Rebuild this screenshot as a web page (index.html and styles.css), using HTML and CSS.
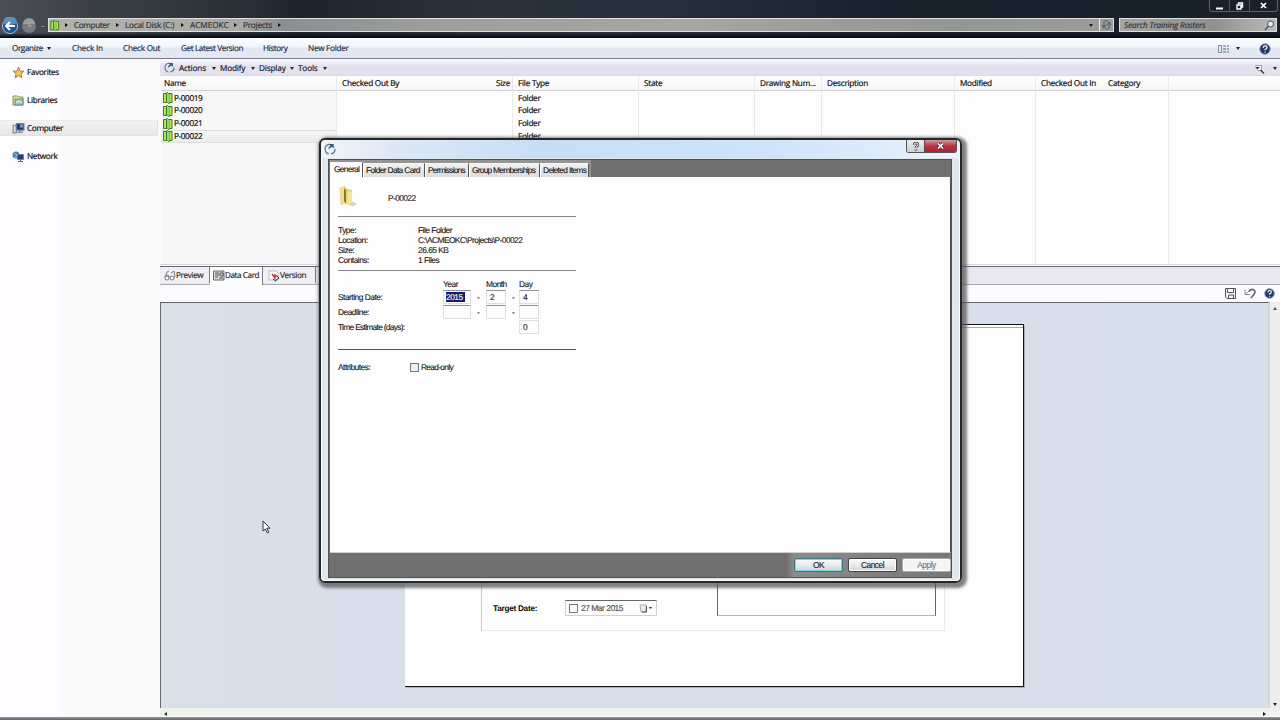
FILE: index.html
```html
<!DOCTYPE html>
<html lang="en">
<head>
<meta charset="utf-8">
<title>Projects</title>
<link rel="stylesheet" href="styles.css">
</head>
<body>
<svg class="defs" aria-hidden="true">
  <symbol id="vault" viewBox="0 0 10 12"><path d="M.5 1.500h3v9h-3zM5 1.500h4v9H5z" fill="#a5ee4d" stroke="#347c1c"/><path d="M4 0l2 2v10l-2-2z" fill="#dcfda2" stroke="#397b22" stroke-width=".7"/></symbol>
  <symbol id="refresh" viewBox="0 0 12 12"><path d="M5.500 1.300Q1.200 1.800 1.200 6t3.600 4.700" fill="none" stroke="#6f8c9d" stroke-width="1.500"/><path d="M7 10.700Q11 10.400 11 6" fill="none" stroke="#55788e" stroke-width="1.400"/><path d="M4.500 1h5.200v4.500L7.800 3.800 5 6 4.200 5l2.200-2.300z" fill="#315c76"/></symbol>
  <symbol id="help" viewBox="0 0 12 12"><circle cx="6" cy="6" r="5.200" fill="#25366b" stroke="#8791ab"/><path d="M4.300 4.800q0-2 1.800-2 1.900 0 1.900 1.500T6.100 6.500v.8M6.100 8.600v1" fill="none" stroke="#fff" stroke-width="1.200"/></symbol>
  <symbol id="pc" viewBox="0 0 12 12"><path d="M1 3h3v7H1z" fill="#dce1e7" stroke="#7b8795"/><path d="M4 1.500h7v6H4z" fill="#233580" stroke="#777f96"/><path d="M5 9.500h5M7.500 8v2" stroke="#67718b"/><path d="M8 2h2v3H7z" fill="#8496cf"/></symbol>
</svg>
<div class="window">
  <header class="titlebar">
    <div class="navbtns">
      <svg width="20" height="18" viewBox="0 0 20 18"><circle cx="10" cy="9" r="7.600" fill="#185695" stroke="#a7bdd4"/><path d="M3 6a7 7 0 0 1 14 0q-7 4-14 0" fill="#5c8dbd"/><path d="M15 9H6m4-4L6 9l4 4" fill="none" stroke="#fff" stroke-width="2"/></svg>
      <svg width="18" height="18" viewBox="0 0 18 18"><circle cx="9" cy="9" r="7.500" fill="#777b7f" stroke="#3f4850"/><path d="M3 7a6 6 0 0 1 12 0z" fill="#989b9d"/><path d="M9 5v5l3-2" stroke="#aeb0b1" fill="none"/></svg>
      <i class="dash"></i>
    </div>
    <div class="address">
      <svg width="10" height="11"><use href="#vault"/></svg>
      <b class="tri"></b><span class="c1">Computer</span><b class="tri"></b><span class="c2">Local Disk (C:)</span><b class="tri"></b><span class="c3">ACMEOKC</span><b class="tri"></b><span class="c4">Projects</span><b class="tri"></b>
      <div class="address-end"><b class="down"></b><svg width="14" height="12" viewBox="0 0 14 12"><path d="M.5 0v12" stroke="#eee"/><path d="M5 2v7m-2-3 2 3 2-3M10 10V3M8 6l2-3 2 3M6 2h3M6 10h3" stroke="#42576b" fill="none"/></svg></div>
    </div>
    <div class="search"><em>Search Training Rosters</em><svg width="11" height="11" viewBox="0 0 11 11"><circle cx="6.500" cy="4" r="3" fill="#e5eaec" stroke="#40556c"/><path d="M4.500 6 1 10" stroke="#40556c" stroke-width="1.400"/></svg></div>
    <div class="caption">
      <span><svg width="8" height="8"><path d="M0 6.500h7" stroke="#fff" stroke-width="2"/></svg></span>
      <span><svg width="8" height="8" viewBox="0 0 8 8"><path d="M2.500 2V1h4v4H5M1 3h4v4H1z" fill="none" stroke="#fff" stroke-width="1.400"/></svg></span>
      <span><svg width="7" height="7" viewBox="0 0 7 7"><path d="M1 1l5 5M6 1L1 6" stroke="#fff" stroke-width="1.700"/></svg></span>
    </div>
  </header>
  <nav class="commands">
    <span class="m1">Organize <b class="down"></b></span><span class="m2">Check In</span><span class="m3">Check Out</span><span class="m4">Get Latest Version</span><span class="m5">History</span><span class="m6">New Folder</span>
    <div class="cmd-right"><svg width="12" height="10" viewBox="0 0 12 10"><path d="M.5 1.500h3v7h-3z" fill="#edf1f5" stroke="#7d8999"/><path d="M5 2h3M5 5h3M5 8h3M9 2h2M9 5h2M9 8h2" stroke="#596475"/></svg><b class="down"></b><svg class="hp" width="12" height="12"><use href="#help"/></svg></div>
  </nav>
  <main class="body">
    <aside class="sidebar">
      <div class="place"><svg width="13" height="13" viewBox="0 0 13 13"><path d="M6.500 1 8 5l4 .2-3.100 2.700 1 4L6.500 9.600l-3.400 2.300 1-4L1 5.200l4-.2z" fill="#f7c45c" stroke="#aa752c" stroke-width=".9"/></svg>Favorites</div>
      <div class="place"><svg width="13" height="13" viewBox="0 0 13 13"><path d="M1 2h5l1 1h4v8H1z" fill="#e8dfa4" stroke="#8a9267"/><path d="M3 5h8v6H3z" fill="#9fc3bd" stroke="#668a82"/><path d="M4 9q3-4 6 0" stroke="#fff" fill="none"/></svg>Libraries</div>
      <div class="place on"><svg width="13" height="13"><use href="#pc"/></svg>Computer</div>
      <div class="place"><svg width="13" height="13" viewBox="0 0 13 13"><circle cx="4" cy="5" r="3.500" fill="#3d84aa"/><path d="M2 3l3 2-2 3" stroke="#a4d7bb" fill="none"/><path d="M5.500 4.500h6v5h-6z" fill="#233c88" stroke="#6d7992"/><path d="M6 11.500h5M8.500 10v2" stroke="#536083"/></svg>Network</div>
    </aside>
    <section class="content">
      <div class="menubar">
        <svg width="11" height="11"><use href="#refresh"/></svg><span class="n1">Actions</span><b class="down"></b><span class="n2">Modify</span><b class="down"></b><span class="n3">Display</span><b class="down"></b><span class="n4">Tools</span><b class="down"></b>
        <div class="menu-right"><svg width="11" height="10" viewBox="0 0 11 10"><path d="M1 1.500h6.500v5H3.500" fill="#fff" stroke="#98a0ad"/><path d="M1 3h5L3.500 5.500z" fill="#333"/><path d="M6.500 6l3.500 3.500" stroke="#333" stroke-width="1.200"/></svg><b class="down"></b></div>
      </div>
      <div class="list">
        <div class="col name"><div class="th">Name</div><div class="td"><svg width="10" height="12"><use href="#vault"/></svg>P-00019</div><div class="td"><svg width="10" height="12"><use href="#vault"/></svg>P-00020</div><div class="td"><svg width="10" height="12"><use href="#vault"/></svg>P-00021</div><div class="td sel"><svg width="10" height="12"><use href="#vault"/></svg>P-00022</div></div>
        <div class="col noline"><div class="th">Checked Out By</div></div>
        <div class="col"><div class="th right">Size</div></div>
        <div class="col"><div class="th">File Type</div><div class="td">Folder</div><div class="td">Folder</div><div class="td">Folder</div><div class="td">Folder</div></div>
        <div class="col"><div class="th">State</div></div>
        <div class="col"><div class="th">Drawing Num...</div></div>
        <div class="col"><div class="th">Description</div></div>
        <div class="col"><div class="th">Modified</div></div>
        <div class="col noline"><div class="th">Checked Out In</div></div>
        <div class="col"><div class="th">Category</div></div>
        <div class="col noline"><div class="th"></div></div>
      </div>
      <div class="tabs">
        <span class="tab t1"><svg width="12" height="11" viewBox="0 0 12 11"><path d="M1 7q2-4 5 0t5-1L10 1 7 3M1 7l2-5 2-1" fill="none" stroke="#788087"/><circle cx="3" cy="8" r="2" fill="#fff" stroke="#777"/><circle cx="8" cy="8" r="2" fill="#fff" stroke="#777"/></svg>Preview</span>
        <span class="tab t2 active"><svg width="12" height="11" viewBox="0 0 12 11"><path d="M.5 1h10.500v9H.5z" fill="#ddd" stroke="#666"/><path d="M2 3h4M2 5h4M2 7h3M7 3h3v3H7zM6 8h4" fill="none" stroke="#555"/></svg>Data Card</span>
        <span class="tab t3"><svg width="12" height="12" viewBox="0 0 12 12"><path d="M1 1h7l2 2v7H1z" fill="#fafafa" stroke="#bbb"/><path d="M4 4l3 4V4M5 6h4" stroke="#bc334b" stroke-width="1.300" fill="none"/><path d="M7 11l4-3-2-2M5 9l3 2" stroke="#28386d" fill="none"/></svg>Version</span><span class="tab t4"></span>
      </div>
      <div class="cardbar">
        <svg width="11" height="11" viewBox="0 0 11 11"><path d="M.5.5h10v10H2L.5 9zM2.500.5v4h6v-4M3.500 10V7h5v3" fill="#f5f5f5" stroke="#555"/></svg>
        <svg width="12" height="11" viewBox="0 0 12 11"><path d="M1 1.500v5h5M1.500 6l4-3.500" fill="none" stroke="#888"/><path d="M5 3.500Q7 1 9 1.500q3 1 1.500 4L7 10" fill="none" stroke="#666" stroke-width="1.600"/></svg>
        <svg width="11" height="11"><use href="#help"/></svg>
      </div>
      <div class="cardarea">
        <div class="canvas"><div class="paper"><div class="group"><span class="target">Target Date:</span><div class="date"><i></i><span>27 Mar 2015</span><svg width="14" height="9" viewBox="0 0 14 9"><path d="M1 1h6v7H2z" fill="#eee" stroke="#aaa"/><path d="M7.500 2v6H3" stroke="#555" fill="none"/><path d="M9.500 3h4l-2 2z" fill="#555"/></svg></div><div class="box"></div></div></div></div>
        <div class="vscroll"><b class="up"></b><b class="down"></b></div>
      </div>
      <div class="hscroll"><b class="left"></b><b class="rt"></b></div>
    </section>
  </main>
  <footer class="strip"></footer>
</div>

<div class="dialog">
  <div class="dlg-title"><svg width="12" height="12"><use href="#refresh"/></svg><div class="dlg-btns"><span class="q"><svg width="8" height="9" viewBox="0 0 8 9"><path d="M2 3q0-2 2-2t2 1.500T4 5v1M4 7v1.500" stroke="#444" stroke-width="2.400" fill="none"/><path d="M2 3q0-2 2-2t2 1.500T4 5v1M4 7v1" stroke="#fff" stroke-width=".9" fill="none"/></svg></span><span class="x"><svg width="9" height="8" viewBox="0 0 9 8"><path d="M2 1.500l5 5M7 1.500L2 6.500" stroke="#643034" stroke-width="3.200"/><path d="M2 1.500l5 5M7 1.500L2 6.500" stroke="#fff" stroke-width="1.700"/></svg></span></div></div>
  <div class="dlg-body">
    <div class="dlg-tabs"><div class="tabset"><span class="dt a">General</span><span class="dt b">Folder Data Card</span><span class="dt c">Permissions</span><span class="dt d">Group Memberships</span><span class="dt e">Deleted Items</span></div></div>
    <div class="page">
      <div class="form">
        <div class="head"><svg width="20" height="22" viewBox="0 0 20 22"><path d="M2 3l5-2 1 16-5 3z" fill="#eee291" stroke="#d5c45f" stroke-width=".5"/><path d="M7 3l7 2v13l-6 2z" fill="#e7d46e"/><path d="M6 3l2 2v14l-2-3z" fill="#8c7930"/><path d="M10 6l4 1v9l5 3-4 2-6-2z" fill="#f1e6a5"/><path d="M14 17l5 2-4 2-5-1z" fill="#d8d5ca"/></svg><span>P-00022</span></div>
        <div class="info"><span>Type:</span><span>File Folder</span><span>Location:</span><span class="loc">C:\ACMEOKC\Projects\P-00022</span><span>Size:</span><span>26.65 KB</span><span>Contains:</span><span>1 Files</span></div>
        <div class="dates"><span></span><span>Year</span><span></span><span>Month</span><span></span><span>Day</span>
          <span>Starting Date:</span><div class="in"><mark>2015</mark></div><span>-</span><div class="in">2</div><span>-</span><div class="in">4</div>
          <span>Deadline:</span><div class="in"></div><span>-</span><div class="in"></div><span>-</span><div class="in"></div>
          <span class="wide">Time Estimate (days):</span><div class="in soft">0</div></div>
        <div class="attrs"><span>Attributes:</span><i></i><span>Read-only</span></div>
      </div>
    </div>
    <div class="actions"><button class="ok">OK</button><button>Cancel</button><button class="off">Apply</button></div>
  </div>
</div>
<svg class="cursor" width="9" height="15" viewBox="0 0 9 15"><path d="M1 1v10l2.300-2 2 4 1.500-.8-2-4H8z" fill="#fff" stroke="#333"/></svg>
</body>
</html>
```
FILE: styles.css
```css
* { box-sizing: border-box; }
body { margin: 0; width: 1280px; height: 720px; overflow: hidden; position: relative; font: 8.2px/12px "Open Sans", "Noto Sans", sans-serif; letter-spacing: -.38px; color: #080808; -webkit-text-stroke: .18px; text-rendering: geometricPrecision; white-space: nowrap; background: #fdfdfe; }
svg { display: block; flex: none; }
.defs { position: absolute; width: 0; height: 0; }
.window { display: flex; flex-direction: column; height: 720px; }
.down, .tri, .up, .left, .rt { display: block; flex: none; width: 0; height: 0; border: 2.5px solid transparent; }
.down { border-top: 3px solid #222; border-bottom: 0; }
.up { border-bottom: 3px solid #555; border-top: 0; }
.tri, .rt { border-left: 3px solid #111; border-right: 0; }
.left { border-right: 3px solid #333; border-left: 0; }

.titlebar { position: relative; height: 38px; flex: none; display: flex; align-items: flex-start; padding-top: 18px; background: linear-gradient(#0000 0 33px, #090d17 37px), linear-gradient(90deg, #4b4f54, #3a3f45 100px, #2a3037 240px, #1e242c 300px, #2b323c 480px, #27303b 650px, #19222c 900px, #18202a); }
.navbtns { display: flex; width: 48px; align-items: center; margin-top: -1px; }
.dash { width: 4px; height: 1px; background: #6d8ca3; margin-left: 3px; }
.address, .search { height: 14px; border: 1px solid #e0e0e0; background: linear-gradient(90deg, #b2b2ae, #a8a9a6 18%, #8c8e90 22%, #9fa09e 38%, #a6a6a3 60%, #949595 85%, #9b9c9b); display: flex; align-items: center; color: #303338; }
.address { width: 1066px; padding-left: 1px; }
.address span, .search em { display: block; padding-top: 2px; }
.address span { margin-left: 6px; }
.address .tri { margin-left: 5px; }
.address .c1 { width: 37px; } .address .c2 { width: 51px; letter-spacing: -.2px; } .address .c3 { width: 39px; letter-spacing: 0; } .address .c4 { width: 30px; letter-spacing: -.2px; }
.address-end { margin-left: auto; display: flex; align-items: center; gap: 6px; }
.search { margin-left: 5px; width: 158px; justify-content: space-between; padding: 0 1px 0 4px; background: linear-gradient(90deg, #a5a5a3, #90908f 60%, #bbb); letter-spacing: -.15px; }
.caption { position: absolute; right: 2px; top: 0; height: 12px; display: flex; border: 1px solid #59616b; border-top: 0; border-radius: 0 0 3px 3px; }
.caption span { display: flex; justify-content: center; align-items: center; width: 19px; }
.caption span:first-child { width: 20px; border-right: 1px solid #49515b; }
.caption span:last-child { width: 28px; border-left: 1px solid #49515b; }

.commands { height: 21px; flex: none; display: flex; align-items: center; background: linear-gradient(#fcfdff, #f0f5fb 45%, #e4e8f3 50%, #e2e7f2); border-bottom: 1px solid #767c88; padding: 1px 0 0 12px; color: #1e2d45; letter-spacing: -.42px; }
.commands .m1 { width: 60px; display: flex; align-items: center; gap: 4px; } .m2 { width: 51px; } .m3 { width: 58px; } .m4 { width: 82px; } .m5 { width: 45px; }
.m6 { letter-spacing: -.28px; }
.m2 { letter-spacing: -.2px; } .m3 { letter-spacing: -.25px; }
.cmd-right { margin-left: auto; display: flex; gap: 6px; align-items: center; padding-right: 9px; }
.cmd-right .hp { margin-left: 13px; }

.body { display: flex; flex: 1; min-height: 0; }
.sidebar { width: 160px; background: linear-gradient(90deg, #fdfcfe 60px, #f9f9fa 66px); padding-top: 5px; }
.place { height: 16px; margin-bottom: 12px; padding: 1px 0 0 12px; display: flex; align-items: center; gap: 2px; letter-spacing: -.3px; }
.place svg { margin-top: -1px; }
.place.on { width: 158px; background: linear-gradient(#f3f3f3, #e7e7e7); border: 1px solid #e1e1e1; border-left: 0; border-top-color: #ececec; }
.content { flex: 1; min-width: 0; display: flex; flex-direction: column; }
.menubar { height: 17px; flex: none; background: linear-gradient(#fafaff, #e3e1ee 45%, #e4e1ed); border-bottom: 1px solid #dbd9e2; padding: 3px 3px 0 4px; display: flex; align-items: center; color: #15152a; letter-spacing: -.15px; }
.menubar > svg { margin-top: -2px; }
.menubar .down { margin-right: 4px; }
.n1 { margin-left: 4px; width: 33px; } .n2 { width: 31px; } .n3 { width: 31px; } .n4 { width: 25px; }
.menu-right { margin-left: auto; display: flex; align-items: center; gap: 8px; }
.menubar .menu-right .down { margin-right: 0; }
.list { height: 189px; flex: none; padding-left: 1px; display: grid; grid-template-columns: 176px 119px 57px 126px 116px 67px 133px 81px 67px 66px 1fr; background: #fdfdfd; border-bottom: 1px solid #d8d8de; }
.col { border-right: 1px solid #eaeaea; min-width: 0; }
.col.noline { border-right: 0; }
.col.name { background: #f7f7f7; }
.th { height: 15px; padding: 2px 0 0 5px; border-bottom: 1px solid #d0d0d0; background: linear-gradient(#fdfdfd, #f7f7f8); margin-bottom: 1px; letter-spacing: -.24px; }
.col.name .th { padding-left: 3px; }
.th.right { text-align: right; padding-right: 2px; }
.td { height: 12.67px; padding: 1px 0 0 5px; display: flex; align-items: center; letter-spacing: -.28px; }
.td svg { margin-top: -1px; }
.name .td { padding-left: 2px; gap: 1px; letter-spacing: -.38px; }
.td.sel { background: linear-gradient(#f6f6f6, #ececec); border: 1px solid #dedede; border-left: 0; border-right: 0; }
.tabs { height: 19px; flex: none; display: flex; margin-top: 1px; background: #e9e7f1; border-top: 1px solid #686870; border-bottom: 1px solid #aaa9b0; }
.tab { display: flex; align-items: center; border-right: 1px solid #777; padding: 1px 0 0 4px; background: #f0eff4; height: 16px; color: #292929; }
.tab.active { background: #fdfdfe; height: 18px; padding: 0 0 1px 3px; letter-spacing: -.45px; }
.t1 { width: 50px; } .t2 { width: 53px; } .t3 { width: 53px; padding-left: 5px; } .t4 { width: 1px; }
.cardbar { height: 17px; flex: none; display: flex; justify-content: flex-end; align-items: center; gap: 8px; padding-right: 5px; background: #fcfcfe; }
.cardarea { flex: 1; display: flex; min-height: 0; }
.canvas { flex: 1; background: linear-gradient(90deg, #dae0e7, #d8dfeb 20%, #d8dfeb 80%, #d7e0ea); border-top: 1px solid #606570; border-left: 1px solid #686b70; padding: 21px 0 0 244px; border-right: 2px solid #d3d6dc; }
.paper { width: 619px; height: 363px; background: #fdfdfe; border: solid #111; border-width: 1px 1.5px 1.5px 0; box-shadow: inset 0 2px #fff, inset 0 3px #aaa, 1px 1px 0 #8888; padding: 3px 78px 55px 76px; }
.group { height: 303px; border: 1px solid #e9e9e9; border-left-color: #c8c8c8; display: flex; align-items: flex-end; padding: 0 8px 14px 11px; }
.target { width: 72px; font: bold 8.2px/14px "Liberation Sans", Arial, sans-serif; letter-spacing: -.25px; -webkit-text-stroke: 0; }
.date { width: 92px; height: 16px; border: 1px solid #d1d1d1; border-top-color: #666; display: flex; align-items: center; padding: 0 3px; font: 8.5px/12px "Liberation Sans", sans-serif; letter-spacing: -.52px; color: #555; }
.date i { width: 9px; height: 9px; border: 1px solid #777; margin-right: 3px; }
.date svg { margin-left: auto; }
.box { width: 219px; height: 60px; border: 1px solid #666; border-bottom-color: #b5b5b5; margin-left: auto; }
.vscroll { width: 10px; background: #ededee; display: flex; flex-direction: column; align-items: center; justify-content: space-between; padding: 5px 0 2px; }
.hscroll { height: 9px; flex: none; background: #f0f0ef; display: flex; justify-content: space-between; align-items: center; padding: 3px 14px 0 4px; border-bottom: 1px solid #fff; }
.strip { height: 3px; flex: none; background: linear-gradient(#969696, #606568); }

.dialog { position: absolute; left: 319px; top: 138px; width: 643px; height: 445px; border: 2px solid #24272a; border-radius: 6px; background: linear-gradient(90deg, #f2f5f8, #dce7f5 80px, #c8def7 220px, #cee2fb 430px, #dfebfa 560px, #edf5fc); box-shadow: 2px 2px 3px 3px #555b; padding: 1px 8px 3px 7px; display: flex; flex-direction: column; font: 8.4px/10px "Liberation Sans", Arial, sans-serif; letter-spacing: -.5px; color: #151515; -webkit-text-stroke: .12px; }
.dialog::before { content: ""; position: absolute; inset: 18px 0 0 0; background: #e1e8ed; border: 1px solid #fff; border-top: 0; border-radius: 0 0 4px 4px; }
.dlg-title { position: relative; height: 18px; flex: none; display: flex; align-items: flex-start; padding-top: 2px; margin-left: -4px; }
.dlg-btns { margin: -3px -5px 0 auto; display: flex; height: 13px; border: 1px solid #555; border-top: 0; border-radius: 0 0 3px 3px; overflow: hidden; }
.dlg-btns span { display: flex; align-items: center; justify-content: center; }
.q { width: 17px; background: linear-gradient(#eee, #ccd1d5); }
.x { width: 32px; background: linear-gradient(#cf9a9b, #b73543 50%, #a52737); border-left: 1px solid #644; }
.dlg-body { position: relative; flex: 1; background: #707070; border: 1px solid #4f5254; padding: 0 0 0 1px; display: flex; flex-direction: column; }
.dlg-tabs { height: 17px; flex: none; }
.tabset { width: 261px; height: 17px; padding-top: 2px; display: flex; align-items: flex-end; background: #949494; }
.dt { height: 14px; border: 1px solid #555; border-left-color: #fff; border-top-color: #f8f8f8; border-bottom: 0; background: linear-gradient(#f0f0f0, #ddd); padding: 1px 0 0 2px; letter-spacing: -.65px; }
.dt.a { height: 15px; width: 33px; background: #fdfdfd; padding-left: 3px; }
.b { width: 62px; } .dt.c { width: 44px; letter-spacing: -.8px; } .dt.d { width: 71px; letter-spacing: -.75px; } .e { width: 49px; }
.page { height: 376px; flex: none; background: #fdfdfd; border-right: 1px solid #555; border-bottom: 1px solid #d0d0d0; padding: 8px 0 0 8px; }
.form { width: 238px; }
.head { height: 32px; border-bottom: 1px solid #888; display: flex; align-items: flex-start; letter-spacing: -.6px; }
.head span { padding: 7.5px 0 0 30px; }
.info { height: 54px; border-bottom: 1px solid #888; display: grid; grid-template-columns: 80px 1fr; grid-auto-rows: 9.8px; padding-top: 8.2px; align-content: start; }
.loc { letter-spacing: -.57px; }
.dates { height: 79px; border-bottom: 1px solid #555; padding-top: 8px; display: grid; grid-template-columns: 105px 28px 15px 20px 13px 20px; grid-template-rows: 10px 15px 15.5px 15px; align-content: start; align-items: center; }
.dates > span:nth-child(n+8) { padding-left: 6px; }
.dates > span:nth-child(6n+1) { padding-left: 0; }
.in { height: 14px; border: 1px solid #dfdfe2; border-top-color: #8b8fa0; padding: 1px 3px; }
.in.soft { border-top-color: #dfdfe2; }
.in mark { display: inline-block; background: #151b64; color: #fff; width: 19px; height: 10px; margin-left: -1px; }
.dates .wide { grid-column: span 5; letter-spacing: -.7px; }
.attrs { display: flex; padding-top: 12px; align-items: center; }
.attrs span:first-child { width: 72px; }
.attrs i { width: 9px; height: 9px; background: #eee; border: 1px solid #777; margin-right: 2px; }
.attrs span:last-child { letter-spacing: -.7px; }
.actions { flex: 1; display: flex; justify-content: flex-end; align-items: center; gap: 5px; padding-left: 464px; background: linear-gradient(90deg, #707070 456px, #8b8b8b 464px, #777 100%); }
button { font: inherit; letter-spacing: inherit; width: 49px; height: 14px; padding: 0; border: 1px solid #444; border-radius: 2px; background: linear-gradient(#fafafa, #ececec 50%, #d3d3d3); color: #222; box-shadow: inset 0 0 0 1px #fff; }
button.ok { border-color: #427482; box-shadow: inset 0 0 0 1px #7dd3df; }
button.off { color: #777; background: #f4f4f4; border-color: #aaa; }
.cursor { position: absolute; left: 262px; top: 520px; }
```
